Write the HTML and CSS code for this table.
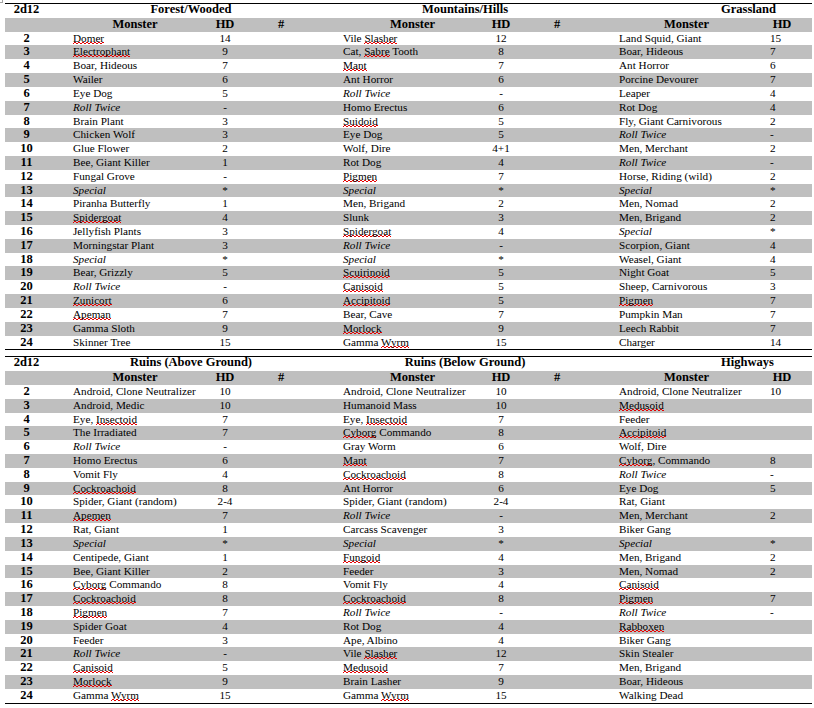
FILE: index.html
```html
<!DOCTYPE html>
<html>
<head>
<meta charset="utf-8">
<link rel="stylesheet" href="styles.css">
</head>
<body>
<div class="page">
<div class="mark"></div>

<div class="tbl">
  <div class="title"><span>2d12</span><span>Forest/Wooded</span><span>Mountains/Hills</span><span>Grassland</span></div>
  <div class="row head shade"><span></span><span>Monster</span><span>HD</span><span>#</span><span>Monster</span><span>HD</span><span>#</span><span>Monster</span><span>HD</span></div>
  <div class="row"><span>2</span><span><u class="sq">Domer</u></span><span>14</span><span></span><span>Vile <u class="sq">Slasher</u></span><span>12</span><span></span><span>Land Squid, Giant</span><span>15</span></div>
  <div class="row shade"><span>3</span><span><u class="sq">Electrophant</u></span><span>9</span><span></span><span>Cat, <u class="sq">Sabre</u> Tooth</span><span>8</span><span></span><span>Boar, Hideous</span><span>7</span></div>
  <div class="row"><span>4</span><span>Boar, Hideous</span><span>7</span><span></span><span><u class="sq">Mant</u></span><span>7</span><span></span><span>Ant Horror</span><span>6</span></div>
  <div class="row shade"><span>5</span><span>Wailer</span><span>6</span><span></span><span>Ant Horror</span><span>6</span><span></span><span>Porcine Devourer</span><span>7</span></div>
  <div class="row"><span>6</span><span>Eye Dog</span><span>5</span><span></span><span class="it">Roll Twice</span><span>-</span><span></span><span>Leaper</span><span>4</span></div>
  <div class="row shade"><span>7</span><span class="it">Roll Twice</span><span>-</span><span></span><span>Homo Erectus</span><span>6</span><span></span><span>Rot Dog</span><span>4</span></div>
  <div class="row"><span>8</span><span>Brain Plant</span><span>3</span><span></span><span><u class="sq">Suidoid</u></span><span>5</span><span></span><span>Fly, Giant Carnivorous</span><span>2</span></div>
  <div class="row shade"><span>9</span><span>Chicken Wolf</span><span>3</span><span></span><span>Eye Dog</span><span>5</span><span></span><span class="it">Roll Twice</span><span>-</span></div>
  <div class="row"><span>10</span><span>Glue Flower</span><span>2</span><span></span><span>Wolf, Dire</span><span>4+1</span><span></span><span>Men, Merchant</span><span>2</span></div>
  <div class="row shade"><span>11</span><span>Bee, Giant Killer</span><span>1</span><span></span><span>Rot Dog</span><span>4</span><span></span><span class="it">Roll Twice</span><span>-</span></div>
  <div class="row"><span>12</span><span>Fungal Grove</span><span>-</span><span></span><span><u class="sq">Pigmen</u></span><span>7</span><span></span><span>Horse, Riding (wild)</span><span>2</span></div>
  <div class="row shade"><span>13</span><span class="it">Special</span><span>*</span><span></span><span class="it">Special</span><span>*</span><span></span><span class="it">Special</span><span>*</span></div>
  <div class="row"><span>14</span><span>Piranha Butterfly</span><span>1</span><span></span><span>Men, Brigand</span><span>2</span><span></span><span>Men, Nomad</span><span>2</span></div>
  <div class="row shade"><span>15</span><span><u class="sq">Spidergoat</u></span><span>4</span><span></span><span>Slunk</span><span>3</span><span></span><span>Men, Brigand</span><span>2</span></div>
  <div class="row"><span>16</span><span>Jellyfish Plants</span><span>3</span><span></span><span><u class="sq">Spidergoat</u></span><span>4</span><span></span><span class="it">Special</span><span>*</span></div>
  <div class="row shade"><span>17</span><span>Morningstar Plant</span><span>3</span><span></span><span class="it">Roll Twice</span><span>-</span><span></span><span>Scorpion, Giant</span><span>4</span></div>
  <div class="row"><span>18</span><span class="it">Special</span><span>*</span><span></span><span class="it">Special</span><span>*</span><span></span><span>Weasel, Giant</span><span>4</span></div>
  <div class="row shade"><span>19</span><span>Bear, Grizzly</span><span>5</span><span></span><span><u class="sq">Scuirinoid</u></span><span>5</span><span></span><span>Night Goat</span><span>5</span></div>
  <div class="row"><span>20</span><span class="it">Roll Twice</span><span>-</span><span></span><span><u class="sq">Canisoid</u></span><span>5</span><span></span><span>Sheep, Carnivorous</span><span>3</span></div>
  <div class="row shade"><span>21</span><span><u class="sq">Zunicort</u></span><span>6</span><span></span><span><u class="sq">Accipitoid</u></span><span>5</span><span></span><span><u class="sq">Pigmen</u></span><span>7</span></div>
  <div class="row"><span>22</span><span><u class="sq">Apeman</u></span><span>7</span><span></span><span>Bear, Cave</span><span>7</span><span></span><span>Pumpkin Man</span><span>7</span></div>
  <div class="row shade"><span>23</span><span>Gamma Sloth</span><span>9</span><span></span><span><u class="sq">Morlock</u></span><span>9</span><span></span><span>Leech Rabbit</span><span>7</span></div>
  <div class="row"><span>24</span><span>Skinner Tree</span><span>15</span><span></span><span>Gamma <u class="sq">Wyrm</u></span><span>15</span><span></span><span>Charger</span><span>14</span></div>
</div>

<div class="tbl">
  <div class="title"><span>2d12</span><span>Ruins (Above Ground)</span><span>Ruins (Below Ground)</span><span>Highways</span></div>
  <div class="row head shade"><span></span><span>Monster</span><span>HD</span><span>#</span><span>Monster</span><span>HD</span><span>#</span><span>Monster</span><span>HD</span></div>
  <div class="row"><span>2</span><span>Android, Clone Neutralizer</span><span>10</span><span></span><span>Android, Clone Neutralizer</span><span>10</span><span></span><span>Android, Clone Neutralizer</span><span>10</span></div>
  <div class="row shade"><span>3</span><span>Android, Medic</span><span>10</span><span></span><span>Humanoid Mass</span><span>10</span><span></span><span><u class="sq">Medusoid</u></span><span></span></div>
  <div class="row"><span>4</span><span>Eye, <u class="sq">Insectoid</u></span><span>7</span><span></span><span>Eye, <u class="sq">Insectoid</u></span><span>7</span><span></span><span>Feeder</span><span></span></div>
  <div class="row shade"><span>5</span><span>The Irradiated</span><span>7</span><span></span><span><u class="sq">Cyborg</u> Commando</span><span>8</span><span></span><span><u class="sq">Accipitoid</u></span><span></span></div>
  <div class="row"><span>6</span><span class="it">Roll Twice</span><span>-</span><span></span><span>Gray Worm</span><span>6</span><span></span><span>Wolf, Dire</span><span></span></div>
  <div class="row shade"><span>7</span><span>Homo Erectus</span><span>6</span><span></span><span><u class="sq">Mant</u></span><span>7</span><span></span><span><u class="sq">Cyborg</u>, Commando</span><span>8</span></div>
  <div class="row"><span>8</span><span>Vomit Fly</span><span>4</span><span></span><span><u class="sq">Cockroachoid</u></span><span>8</span><span></span><span class="it">Roll Twice</span><span>-</span></div>
  <div class="row shade"><span>9</span><span><u class="sq">Cockroachoid</u></span><span>8</span><span></span><span>Ant Horror</span><span>6</span><span></span><span>Eye Dog</span><span>5</span></div>
  <div class="row"><span>10</span><span>Spider, Giant (random)</span><span>2-4</span><span></span><span>Spider, Giant (random)</span><span>2-4</span><span></span><span>Rat, Giant</span><span></span></div>
  <div class="row shade"><span>11</span><span><u class="sq">Apemen</u></span><span>7</span><span></span><span class="it">Roll Twice</span><span>-</span><span></span><span>Men, Merchant</span><span>2</span></div>
  <div class="row"><span>12</span><span>Rat, Giant</span><span>1</span><span></span><span>Carcass Scavenger</span><span>3</span><span></span><span>Biker Gang</span><span></span></div>
  <div class="row shade"><span>13</span><span class="it">Special</span><span>*</span><span></span><span class="it">Special</span><span>*</span><span></span><span class="it">Special</span><span>*</span></div>
  <div class="row"><span>14</span><span>Centipede, Giant</span><span>1</span><span></span><span><u class="sq">Fungoid</u></span><span>4</span><span></span><span>Men, Brigand</span><span>2</span></div>
  <div class="row shade"><span>15</span><span>Bee, Giant Killer</span><span>2</span><span></span><span>Feeder</span><span>3</span><span></span><span>Men, Nomad</span><span>2</span></div>
  <div class="row"><span>16</span><span><u class="sq">Cyborg</u> Commando</span><span>8</span><span></span><span>Vomit Fly</span><span>4</span><span></span><span><u class="sq">Canisoid</u></span><span></span></div>
  <div class="row shade"><span>17</span><span><u class="sq">Cockroachoid</u></span><span>8</span><span></span><span><u class="sq">Cockroachoid</u></span><span>8</span><span></span><span><u class="sq">Pigmen</u></span><span>7</span></div>
  <div class="row"><span>18</span><span><u class="sq">Pigmen</u></span><span>7</span><span></span><span class="it">Roll Twice</span><span>-</span><span></span><span class="it">Roll Twice</span><span>-</span></div>
  <div class="row shade"><span>19</span><span>Spider Goat</span><span>4</span><span></span><span>Rot Dog</span><span>4</span><span></span><span><u class="sq">Rabboxen</u></span><span></span></div>
  <div class="row"><span>20</span><span>Feeder</span><span>3</span><span></span><span>Ape, Albino</span><span>4</span><span></span><span>Biker Gang</span><span></span></div>
  <div class="row shade"><span>21</span><span class="it">Roll Twice</span><span>-</span><span></span><span>Vile <u class="sq">Slasher</u></span><span>12</span><span></span><span>Skin Stealer</span><span></span></div>
  <div class="row"><span>22</span><span><u class="sq">Canisoid</u></span><span>5</span><span></span><span><u class="sq">Medusoid</u></span><span>7</span><span></span><span>Men, Brigand</span><span></span></div>
  <div class="row shade"><span>23</span><span><u class="sq">Morlock</u></span><span>9</span><span></span><span>Brain Lasher</span><span>9</span><span></span><span>Boar, Hideous</span><span></span></div>
  <div class="row"><span>24</span><span>Gamma <u class="sq">Wyrm</u></span><span>15</span><span></span><span>Gamma <u class="sq">Wyrm</u></span><span>15</span><span></span><span>Walking Dead</span><span></span></div>
</div>

</div>
</body>
</html>
```

FILE: styles.css
```css
html, body {
  margin: 0;
  padding: 0;
  background: #ffffff;
}

body {
  font-family: "Liberation Serif", "Times New Roman", serif;
  font-size: 11.2px;
  color: #000000;
}

.page {
  position: relative;
  padding: 3px 2px 0 5px;
}

.mark {
  position: absolute;
  left: 0;
  top: 0;
  width: 2px;
  height: 2px;
  border-right: 1px solid #a6a6a6;
  border-bottom: 1px solid #a6a6a6;
}

.tbl {
  width: 807px;
  border-top: 1px solid #000000;
  border-bottom: 1px solid #000000;
}

.tbl + .tbl {
  margin-top: 6px;
}

.title {
  display: grid;
  grid-template-columns: 43px 264px 276px 224px;
  height: 13.82px;
  line-height: 10.6px;
  font-weight: bold;
  font-size: 12.5px;
  white-space: nowrap;
}

.title > :nth-child(1) { text-align: center; }
.title > :nth-child(2) { text-align: center; padding-left: 22px; }
.title > :nth-child(3) { text-align: center; padding-left: 30px; }
.title > :nth-child(4) { text-align: left; padding-left: 133px; }

.row {
  display: grid;
  grid-template-columns: 43px 152px 50px 62px 164px 50px 62px 164px 60px;
  height: 13.82px;
  line-height: 13.82px;
  white-space: nowrap;
}

.shade {
  background: #bfbfbf;
}

.row > :nth-child(1) {
  text-align: center;
  font-weight: bold;
  font-size: 12.5px;
}

.row > :nth-child(2) { padding-left: 25px; }
.row > :nth-child(3),
.row > :nth-child(6) { text-align: center; }
.row > :nth-child(5),
.row > :nth-child(8) { padding-left: 31px; }
.row > :nth-child(9) { padding-left: 18px; }

.head {
  font-weight: bold;
  font-size: 12.5px;
}

.head > span { text-align: center; }
.head > :nth-child(2) { padding-left: 22px; }
.head > :nth-child(5) { padding-left: 37px; }
.head > :nth-child(8) { padding-left: 33px; }
.head > :nth-child(9) { padding-left: 0; }

.it {
  font-style: italic;
}

.sq {
  text-decoration: none;
  background-image:
    linear-gradient(90deg, transparent 1px, #e60000 1px, #e60000 3px, transparent 3px),
    linear-gradient(90deg, #e60000 1px, transparent 1px, transparent 3px, #e60000 3px);
  background-size: 4px 1px, 4px 1px;
  background-repeat: repeat-x, repeat-x;
  background-position: 0 calc(100% - 1px), 0 100%;
}
```
